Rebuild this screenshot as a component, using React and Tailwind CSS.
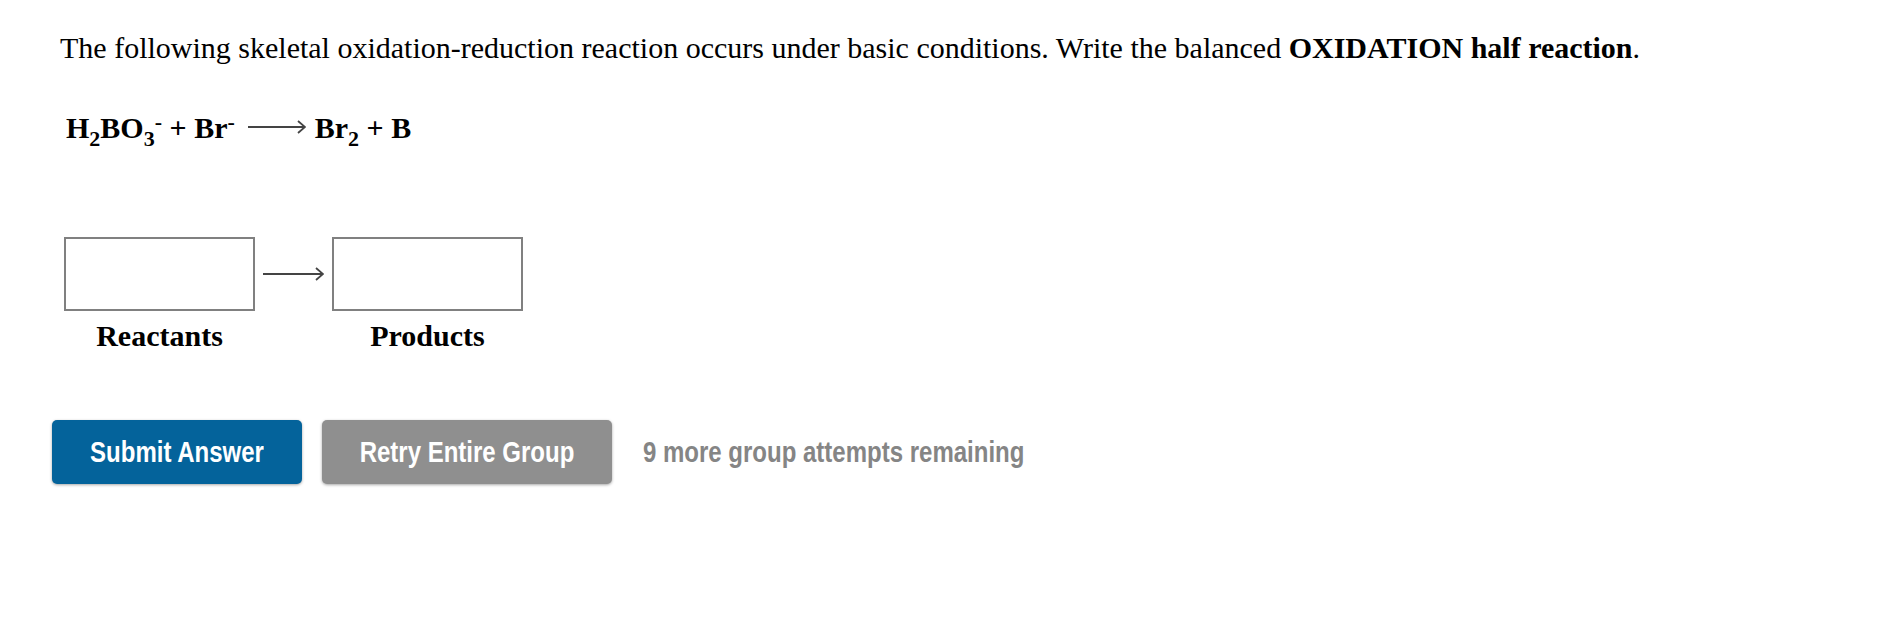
const Arrow = ({ width }) => (
  <svg width={width} height="14" viewBox={`0 0 ${width} 14`} className="block">
    <line x1="0" y1="7" x2={width - 1} y2="7" stroke="#444" strokeWidth="2" />
    <path d={`M${width - 8} 1 L${width - 1} 7 L${width - 8} 13`} fill="none" stroke="#444" strokeWidth="1.8" />
  </svg>
);

const Sub = ({ children }) => (
  <span className="text-[22px] leading-none align-[-8px]">{children}</span>
);

const Sup = ({ children }) => (
  <span className="text-[22px] leading-none align-[9px]">{children}</span>
);

export default function App() {
  return (
    <div className="min-h-[638px] bg-white pl-[60px] pt-[31px] text-black">
      <p className="font-['Liberation_Serif',serif] text-[30px] leading-[34px]">
        The following skeletal oxidation-reduction reaction occurs under basic conditions. Write the balanced{" "}
        <b>OXIDATION half reaction</b>.
      </p>

      {/* skeletal equation */}
      <div className="mt-[48px] ml-[6px] flex h-[34px] items-center font-['Liberation_Serif',serif] text-[30px] font-bold leading-[34px]">
        <span>
          H<Sub>2</Sub>BO<Sub>3</Sub>
          <Sup>-</Sup> + Br<Sup>-</Sup>
        </span>
        <span className="ml-[13px] mr-[9px] mt-[-6px]">
          <Arrow width={58} />
        </span>
        <span>
          Br<Sub>2</Sub> + B
        </span>
      </div>

      {/* answer boxes */}
      <div className="mt-[90px] ml-[4px] grid grid-cols-[191px_77px_191px] font-['Liberation_Serif',serif] text-[30px] font-bold leading-[34px]">
        <div className="h-[74px] border-2 border-[#808080]" />
        <div className="flex items-center justify-center">
          <Arrow width={61} />
        </div>
        <div className="h-[74px] border-2 border-[#808080]" />
        <div className="mt-2 text-center">Reactants</div>
        <div />
        <div className="mt-2 text-center">Products</div>
      </div>

      {/* actions */}
      <div className="mt-[67px] ml-[-8px] flex items-center gap-5 font-['Liberation_Sans',Arial,sans-serif] text-[24px] font-bold">
        <button className="h-[64px] w-[250px] rounded-[5px] bg-[#04639b] text-white shadow-[0_1px_3px_rgba(0,0,0,0.35)]">
          <span className="inline-block scale-y-125">Submit Answer</span>
        </button>
        <button className="h-[64px] w-[290px] rounded-[5px] bg-[#8f8f8f] text-white shadow-[0_1px_3px_rgba(0,0,0,0.35)]">
          <span className="inline-block scale-y-125">Retry Entire Group</span>
        </button>
        <span className="ml-[11px] inline-block scale-y-125 text-[#858585]">9 more group attempts remaining</span>
      </div>
    </div>
  );
}
